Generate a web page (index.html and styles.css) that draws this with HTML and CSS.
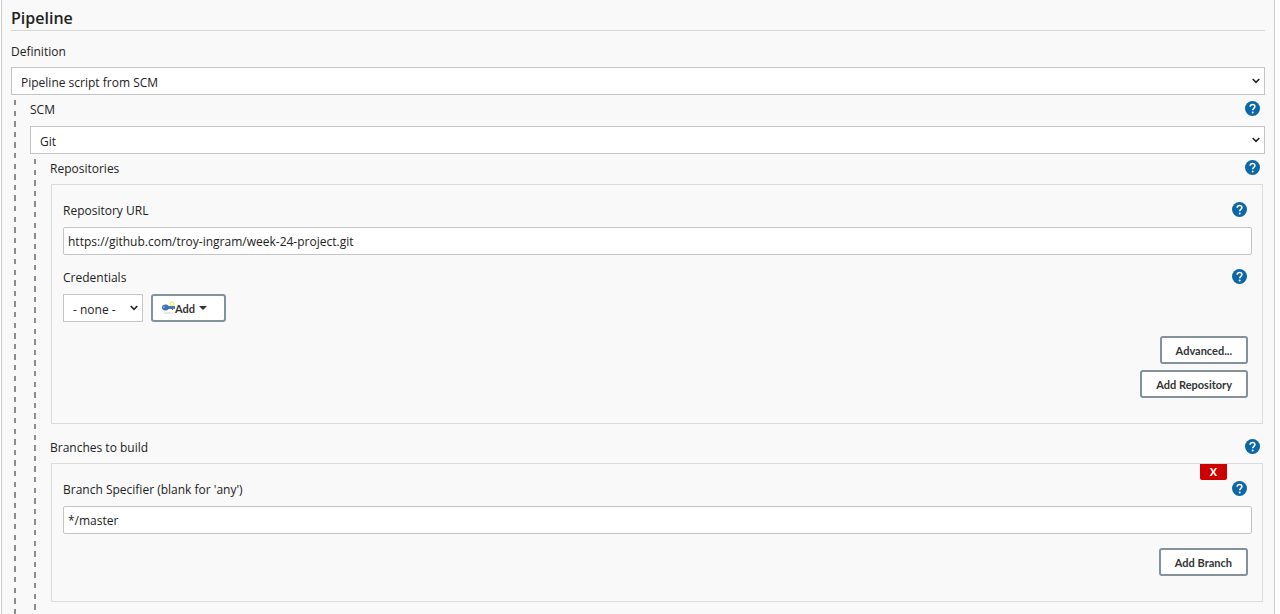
FILE: index.html
```
<!DOCTYPE html>
<html lang="en">
<head>
    <meta charset="UTF-8">
    <meta name="viewport" content="width=device-width, initial-scale=1.0">
    <title>Pipeline</title>
    <link rel="stylesheet" href="styles.css">
</head>
<body>
    <svg class="sprite" aria-hidden="true">
        <symbol id="help" viewBox="0 0 24 24">
            <circle cx="12" cy="12" r="12" fill="#0b67a5"/>
            <path d="M8.2 9.3c0-2.3 1.6-3.9 3.9-3.9s3.8 1.5 3.8 3.5c0 2.9-3.6 3-3.6 6" fill="none" stroke="#fff" stroke-width="2.4"/>
            <circle cx="12.3" cy="18.2" r="1.6" fill="#fff"/>
        </symbol>
    </svg>

    <form class="panel" action="">
        <h1 class="title">Pipeline</h1>

        <div class="row first">
            <label for="definition">Definition</label>
        </div>
        <select class="wide" id="definition" name="definition">
            <option>Pipeline script from SCM</option>
            <option>Pipeline script</option>
        </select>

        <div class="nested">
            <div class="row">
                <label for="scm">SCM</label>
                <a class="help" href="#" aria-label="Help for SCM"><svg><use href="#help"/></svg></a>
            </div>
            <select class="wide" id="scm" name="scm">
                <option>Git</option>
                <option>None</option>
            </select>

            <div class="nested">
                <div class="row">
                    <span>Repositories</span>
                    <a class="help" href="#" aria-label="Help for Repositories"><svg><use href="#help"/></svg></a>
                </div>
                <div class="box">
                    <div class="row">
                        <label for="url">Repository URL</label>
                        <a class="help" href="#" aria-label="Help for Repository URL"><svg><use href="#help"/></svg></a>
                    </div>
                    <input type="text" id="url" name="url" value="https://github.com/troy-ingram/week-24-project.git">

                    <div class="row spaced">
                        <label for="credentials">Credentials</label>
                        <a class="help" href="#" aria-label="Help for Credentials"><svg><use href="#help"/></svg></a>
                    </div>
                    <div class="credentials">
                        <select id="credentials" name="credentials">
                            <option>- none -</option>
                        </select>
                        <button class="btn add" type="button">
                            <svg class="key" viewBox="0 0 13 14">
                                <ellipse cx="6" cy="12" rx="5" ry="1" fill="#e6e6e6"/>
                                <circle cx="10" cy="3" r="2" fill="#fff" stroke="#f5e63c" stroke-width="1"/>
                                <path d="M6 5h7v3h-2v1h-1V8H6z" fill="#4a7ab5"/>
                                <ellipse cx="3.5" cy="6.5" rx="3.5" ry="3" fill="#4274b2"/>
                                <circle cx="2" cy="6" r="1" fill="#7fa6d4"/>
                            </svg>
                            Add
                            <span class="caret"></span>
                        </button>
                    </div>

                    <div class="actions">
                        <button class="btn" type="button">Advanced...</button>
                        <button class="btn" type="button">Add Repository</button>
                    </div>
                </div>

                <div class="row branches">
                    <span>Branches to build</span>
                    <a class="help" href="#" aria-label="Help for Branches to build"><svg><use href="#help"/></svg></a>
                </div>
                <div class="box">
                    <button class="delete" type="button">X</button>
                    <div class="row">
                        <label for="branch">Branch Specifier (blank for 'any')</label>
                        <a class="help" href="#" aria-label="Help for Branch Specifier"><svg><use href="#help"/></svg></a>
                    </div>
                    <input type="text" id="branch" name="branch" value="*/master">

                    <div class="actions">
                        <button class="btn" type="button">Add Branch</button>
                    </div>
                </div>
            </div>
        </div>
    </form>
</body>
</html>
```

FILE: styles.css
```
* {
    box-sizing: border-box;
}
body {
    margin: 0;
    background: #fff;
    color: #222;
    font-family: "Open Sans", "Noto Sans", sans-serif;
    font-size: 12px;
    line-height: 16px;
}
.sprite {
    display: none;
}
.panel {
    margin: 0 5px 0 1px;
    padding: 7px 9px 24px;
    border-left: 1px solid #ccc;
    border-right: 1px solid #ccc;
    background: #f9f9f9;
}
.title {
    margin: 0;
    border-bottom: 1px solid #d6d6d6;
    font-size: 16px;
    font-weight: 600;
    line-height: 23px;
}

/* label on the left, help icon on the right */
.row {
    display: flex;
    justify-content: space-between;
    align-items: center;
    height: 31px;
    padding: 0 5px 2px 0;
}
.first {
    margin-top: 6px;
    height: 30px;
    padding-bottom: 0;
}
.spaced {
    margin-top: 8px;
}
.branches {
    margin-top: 9px;
}
.help, .help svg {
    display: block;
    width: 15px;
    height: 15px;
}
.help {
    margin-bottom: 2px;
}

select, input[type=text] {
    display: block;
    height: 28px;
    border: 1px solid #c4c4c4;
    border-radius: 0;
    background-color: #fff;
    color: #222;
    font-family: inherit;
    font-size: 12px;
}
select {
    padding: 2px 18px 0 9px;
    appearance: none;
    background-image: url("data:image/svg+xml,%3Csvg xmlns='http://www.w3.org/2000/svg' width='8' height='6'%3E%3Cpath d='M.7 1 4 4.3 7.3 1' fill='none' stroke='%23222' stroke-width='1.6'/%3E%3C/svg%3E");
    background-repeat: no-repeat;
    background-position: right 4px center;
}
.wide, input[type=text] {
    width: 100%;
}
input[type=text] {
    padding: 1px 4px 0;
    border-radius: 2px;
}

/* dashed guide down the left side of each level */
.nested {
    position: relative;
    padding-left: 19px;
}
.nested::before {
    content: "";
    position: absolute;
    top: 5px;
    bottom: -24px;
    left: 3px;
    width: 2px;
    background: repeating-linear-gradient(#8c8c8c 0 10%, transparent 10% 20%) 0 0 / 2px 53px;
}
.nested .nested {
    padding-left: 20px;
}
.nested .nested::before {
    left: 4px;
}

.box {
    position: relative;
    margin: -1px 2px 0 1px;
    padding: 11px 10px 25px 11px;
    border: 1px solid #dcdcdc;
}
.credentials {
    display: flex;
    gap: 8px;
}
.credentials select {
    width: 80px;
}
.actions {
    display: flex;
    flex-direction: column;
    align-items: flex-end;
    gap: 6px;
    margin-top: 14px;
    padding-right: 4px;
}
.btn {
    height: 28px;
    padding: 0 14px;
    border: 2px solid #84929c;
    border-radius: 3px;
    background: #fff;
    color: #333;
    font-family: Lato, "Open Sans", sans-serif;
    font-size: 11px;
    font-weight: 700;
}
.add {
    display: flex;
    align-items: center;
    width: 75px;
    padding: 0 9px;
}
.key {
    width: 13px;
    height: 14px;
}
.caret {
    margin-left: 4px;
    border: 4px solid transparent;
    border-top-color: #333;
    border-bottom: 0;
}
.delete {
    position: absolute;
    top: 0;
    right: 35px;
    width: 27px;
    height: 16px;
    padding: 0;
    border: 0;
    border-radius: 0 0 2px 2px;
    background: #c00;
    color: #fff;
    font-family: inherit;
    font-size: 11px;
    font-weight: 700;
    line-height: 16px;
}
```
